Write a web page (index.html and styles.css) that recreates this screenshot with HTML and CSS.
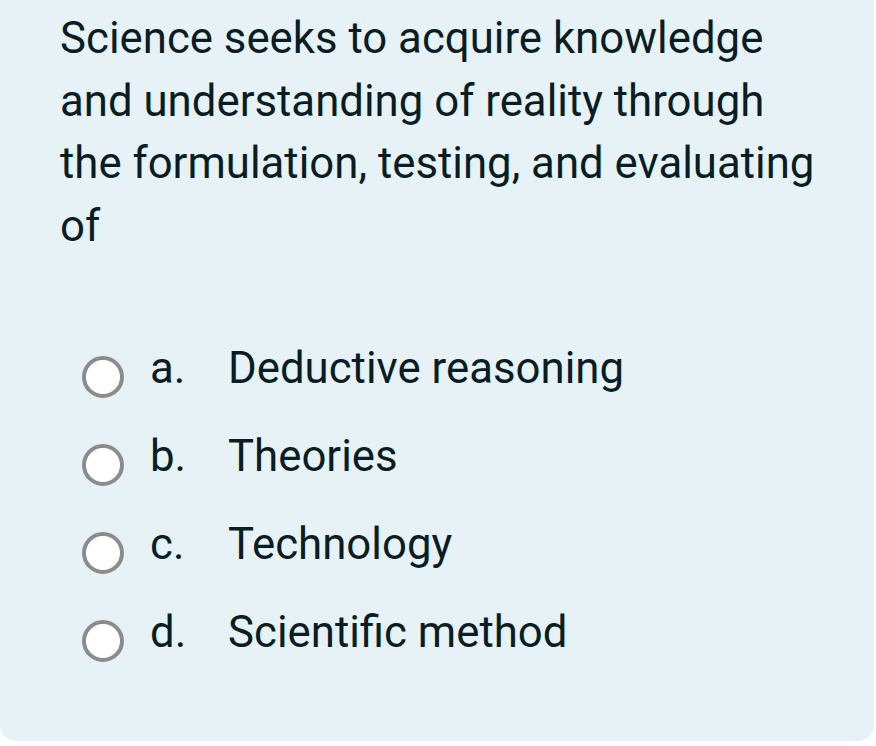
FILE: index.html
```html
<!DOCTYPE html>
<html>
<head>
<meta charset="utf-8">
<link rel="stylesheet" href="styles.css">
</head>
<body>
<div class="card">
  <p class="question">Science seeks to acquire knowledge and understanding of reality through the formulation, testing, and evaluating of</p>
  <ul class="options">
    <li class="option"><span class="radio"></span><span class="letter">a.</span><span class="label">Deductive reasoning</span></li>
    <li class="option"><span class="radio"></span><span class="letter">b.</span><span class="label">Theories</span></li>
    <li class="option"><span class="radio"></span><span class="letter">c.</span><span class="label">Technology</span></li>
    <li class="option"><span class="radio"></span><span class="letter">d.</span><span class="label">Scientific method</span></li>
  </ul>
</div>
</body>
</html>
```
FILE: styles.css
```css
html, body {
  margin: 0;
  padding: 0;
  background: #ffffff;
}
body {
  width: 876px;
  height: 746px;
  overflow: hidden;
  font-family: Roboto, "Liberation Sans", sans-serif;
  color: #0b1d24;
}
.card {
  box-sizing: border-box;
  width: 874px;
  height: 741px;
  background: #e6f2f5;
  border-radius: 0 0 16px 16px;
  padding: 7px 40px 0 60px;
}
.question {
  margin: 0;
  font-size: 43.75px;
  line-height: 62.5px;
  width: 765px;
}
.options {
  list-style: none;
  margin: 67px 0 0 0;
  padding: 0 0 0 22px;
}
.option {
  display: flex;
  align-items: center;
  height: 88px;
  font-size: 43.75px;
}
.radio {
  box-sizing: border-box;
  width: 42px;
  height: 42px;
  margin-top: 18px;
  border: 4px solid #8c8c8c;
  border-radius: 50%;
  background: #ffffff;
  flex: none;
}
.letter {
  width: 78px;
  margin-left: 26px;
}
```
